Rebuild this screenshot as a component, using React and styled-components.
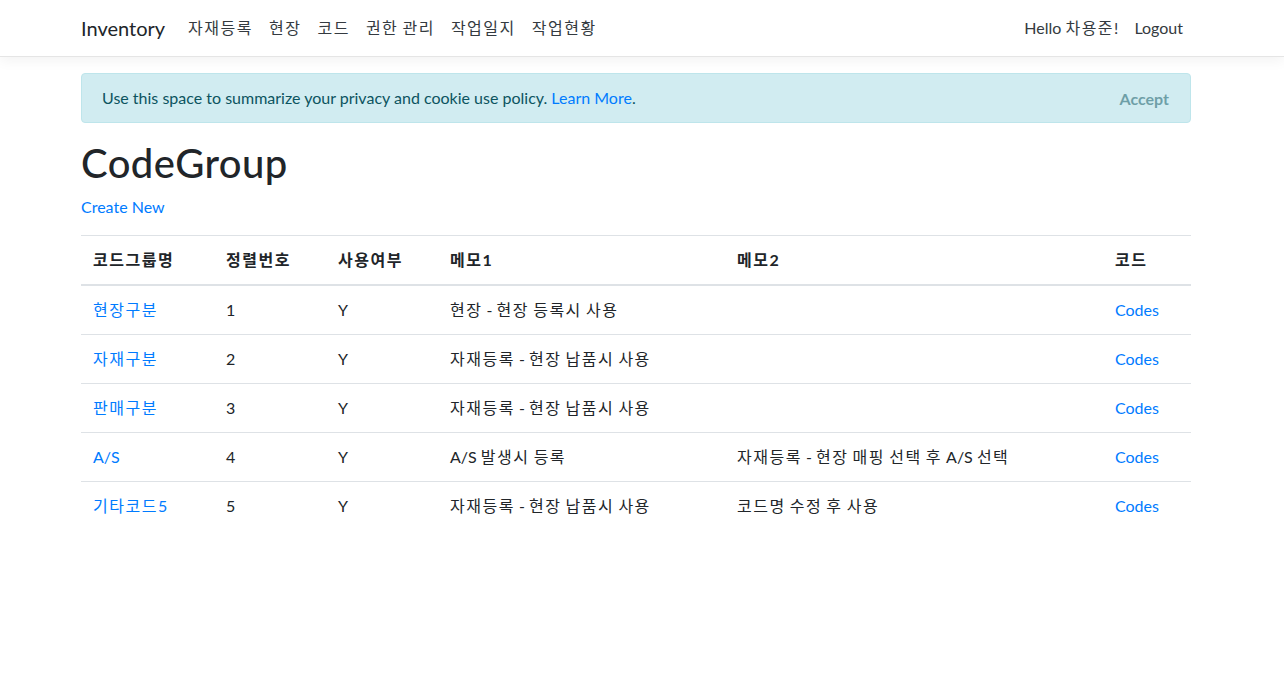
import styled, { createGlobalStyle } from "styled-components";

const GlobalStyle = createGlobalStyle`
  html, body {
    margin: 0;
    padding: 0;
    background: #fff;
  }
  body {
    font-family: "Lato", "Noto Sans CJK KR", sans-serif;
    font-size: 16px;
    line-height: 1.5;
    color: #212529;
  }
  * {
    box-sizing: border-box;
  }
`;

// Hangul in the fallback font runs a little narrower than the original,
// so hangul runs get a touch of tracking
const Hangul = styled.span`
  letter-spacing: 1.5px;
`;

const Text = ({ children }) =>
  String(children)
    .split(/([\uac00-\ud7a3]+)/)
    .map((part, i) =>
      i % 2 ? <Hangul key={i}>{part}</Hangul> : part
    );

const Navbar = styled.nav`
  height: 57px;
  border-bottom: 1px solid #e5e5e5;
  box-shadow: 0 4px 12px rgba(0, 0, 0, 0.05);
  margin-bottom: 16px;
`;

const NavInner = styled.div`
  width: 1110px;
  margin-left: 81px;
  height: 100%;
  display: flex;
  align-items: center;
`;

const Brand = styled.a`
  font-size: 20px;
  color: #212529;
  margin-right: 15px;
  text-decoration: none;
  line-height: 1.5;
`;

const NavList = styled.div`
  display: flex;
  align-items: center;
  flex: ${(p) => (p.$grow ? 1 : "none")};
`;

const NavLink = styled.a`
  color: #343a40;
  padding: 8px;
  text-decoration: none;
`;

const Container = styled.main`
  width: 1110px;
  margin-left: 81px;
`;

const Alert = styled.div`
  display: flex;
  align-items: center;
  justify-content: space-between;
  background: #d1ecf1;
  border: 1px solid #bee5eb;
  border-radius: 4px;
  color: #0c5460;
  padding: 12px 20px;
  margin-bottom: 16px;
`;

const Link = styled.a`
  color: #007bff;
  text-decoration: none;
`;

const AcceptButton = styled.button`
  background: none;
  border: none;
  padding: 0;
  font-family: inherit;
  font-size: 16px;
  font-weight: 700;
  color: #0c5460;
  opacity: 0.5;
  margin-right: 1px;
`;

const Title = styled.h1`
  font-size: 40px;
  font-weight: 500;
  line-height: 1.2;
  letter-spacing: 0.4px;
  margin: 0 0 8px;
`;

const Para = styled.p`
  margin: 0 0 16px;
`;

const Table = styled.table`
  width: 100%;
  border-collapse: collapse;
  table-layout: fixed;
`;

const Th = styled.th`
  text-align: left;
  font-weight: 700;
  padding: 12px;
  border-top: 1px solid #dee2e6;
  border-bottom: 2px solid #dee2e6;
  width: ${(p) => p.$w}px;
`;

const Td = styled.td`
  padding: 12px;
  border-top: 1px solid #dee2e6;
  white-space: nowrap;
`;

const columns = [
  { label: "코드그룹명", w: 133 },
  { label: "정렬번호", w: 112 },
  { label: "사용여부", w: 112 },
  { label: "메모1", w: 287 },
  { label: "메모2", w: 378 },
  { label: "코드", w: 88 },
];

const rows = [
  ["현장구분", "1", "Y", "현장 - 현장 등록시 사용", ""],
  ["자재구분", "2", "Y", "자재등록 - 현장 납품시 사용", ""],
  ["판매구분", "3", "Y", "자재등록 - 현장 납품시 사용", ""],
  ["A/S", "4", "Y", "A/S 발생시 등록", "자재등록 - 현장 매핑 선택 후 A/S 선택"],
  ["기타코드5", "5", "Y", "자재등록 - 현장 납품시 사용", "코드명 수정 후 사용"],
];

const menu = ["자재등록", "현장", "코드", "권한 관리", "작업일지", "작업현황"];

const App = () => {
  return (
    <>
      <GlobalStyle />
      <Navbar>
        <NavInner>
          <Brand href="#">Inventory</Brand>
          <NavList $grow>
            {menu.map((m) => (
              <NavLink key={m} href="#">
                <Text>{m}</Text>
              </NavLink>
            ))}
          </NavList>
          <NavList>
            <NavLink href="#">
              <Text>Hello 차용준!</Text>
            </NavLink>
            <NavLink href="#">Logout</NavLink>
          </NavList>
        </NavInner>
      </Navbar>
      <Container>
        <Alert>
          <span>
            Use this space to summarize your privacy and cookie use policy.{" "}
            <Link href="#">Learn More</Link>.
          </span>
          <AcceptButton>Accept</AcceptButton>
        </Alert>
        <Title>CodeGroup</Title>
        <Para>
          <Link href="#">Create New</Link>
        </Para>
        <Table>
          <thead>
            <tr>
              {columns.map((c) => (
                <Th key={c.label} $w={c.w}>
                  <Text>{c.label}</Text>
                </Th>
              ))}
            </tr>
          </thead>
          <tbody>
            {rows.map((r) => (
              <tr key={r[0]}>
                <Td>
                  <Link href="#">
                    <Text>{r[0]}</Text>
                  </Link>
                </Td>
                <Td>{r[1]}</Td>
                <Td>{r[2]}</Td>
                <Td>
                  <Text>{r[3]}</Text>
                </Td>
                <Td>
                  <Text>{r[4]}</Text>
                </Td>
                <Td>
                  <Link href="#">Codes</Link>
                </Td>
              </tr>
            ))}
          </tbody>
        </Table>
      </Container>
    </>
  );
};

export default App;
